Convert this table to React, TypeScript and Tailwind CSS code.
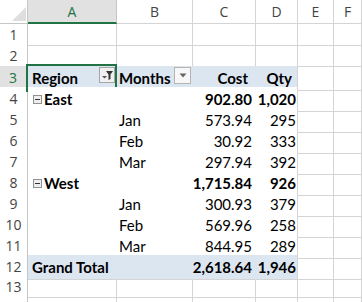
type Kind = "empty" | "header" | "sub" | "item" | "total";

type Row = {
  n: number;
  kind: Kind;
  a?: string;
  b?: string;
  c?: string;
  d?: string;
  beforeTotal?: boolean;
};

const rows: Row[] = [
  { n: 1, kind: "empty" },
  { n: 2, kind: "empty" },
  { n: 3, kind: "header", a: "Region", b: "Months", c: "Cost", d: "Qty" },
  { n: 4, kind: "sub", a: "East", c: "902.80", d: "1,020" },
  { n: 5, kind: "item", b: "Jan", c: "573.94", d: "295" },
  { n: 6, kind: "item", b: "Feb", c: "30.92", d: "333" },
  { n: 7, kind: "item", b: "Mar", c: "297.94", d: "392" },
  { n: 8, kind: "sub", a: "West", c: "1,715.84", d: "926" },
  { n: 9, kind: "item", b: "Jan", c: "300.93", d: "379" },
  { n: 10, kind: "item", b: "Feb", c: "569.96", d: "258" },
  { n: 11, kind: "item", b: "Mar", c: "844.95", d: "289", beforeTotal: true },
  { n: 12, kind: "total", a: "Grand Total", c: "2,618.64", d: "1,946" },
  { n: 13, kind: "empty" },
  { n: 14, kind: "empty" },
];

const cols = "grid grid-cols-[28px_89px_76px_63px_42px_36px_1fr]";
const grid = "border-r border-b border-[#d4d4d4]";
const hdrFont = "font-['Open_Sans',sans-serif] text-[14px] text-[#444]";

// little funnel + arrow button on the row field
const FilterButton = () => (
  <div className="absolute right-[1px] top-[1px] w-[16px] h-[16px] border border-[#a6a6a6] bg-[#f0f0f0]">
    <svg width="14" height="14" viewBox="0 0 14 14">
      <polygon points="2,8 7,8 4.5,10.5" fill="#555" />
      <polygon points="6,3 13,3 10.5,6.5 10.5,11 8.5,12 8.5,6.5" fill="#333" />
    </svg>
  </div>
);

const DropButton = () => (
  <div className="absolute right-[1px] top-[1px] w-[17px] h-[17px] border border-[#b4b4b4] bg-[#f7f7f7] flex items-center justify-center">
    <svg width="8" height="5" viewBox="0 0 8 5">
      <polygon points="0.5,0.5 7.5,0.5 4,4.5" fill="#666" />
    </svg>
  </div>
);

const Collapse = () => (
  <span className="inline-flex items-center justify-center w-[9px] h-[9px] border border-[#919191] bg-[#eeeeee] mr-[2px] ml-[1px]">
    <span className="block w-[5px] h-[1px] bg-[#333]" />
  </span>
);

function PivotCells({ r }: { r: Row }) {
  const bold =
    r.kind === "header" || r.kind === "sub" || r.kind === "total" ? "font-bold" : "";
  const bg = r.kind === "header" || r.kind === "total" ? "bg-[#dce6f1]" : "bg-white";
  const bottom =
    r.kind === "header" || r.kind === "sub" || r.beforeTotal
      ? "border-b border-[#a9c0de]"
      : r.kind === "total"
        ? "border-b border-[#d4d4d4]"
        : "border-b border-transparent";
  const base = `relative flex items-center pt-[1px] font-['Lato',sans-serif] text-[15px] text-black ${bg} ${bottom} ${bold}`;

  return (
    <>
      <div className={`${base} border-r border-r-transparent pl-[4px]`}>
        {r.kind === "sub" && <Collapse />}
        <span className="whitespace-nowrap">{r.a}</span>
        {r.kind === "header" && (
          <>
            <FilterButton />
            <div className="absolute -left-[2px] -top-[2px] -right-[1px] -bottom-[2px] border-2 border-[#217346] pointer-events-none" />
            <div className="absolute -right-[4px] -bottom-[5px] w-[7px] h-[7px] bg-[#217346] border border-white" />
          </>
        )}
      </div>
      <div className={`${base} border-r border-r-transparent pl-[2px]`}>
        <span>{r.b}</span>
        {r.kind === "header" && <DropButton />}
      </div>
      <div className={`${base} border-r border-r-transparent justify-end ${r.kind === "header" ? "pr-[7px]" : "pr-[3px]"}`}>
        {r.c}
      </div>
      <div className={`${base} border-r border-r-[#d4d4d4] justify-end ${r.kind === "header" ? "pr-[5px]" : "pr-[1px]"}`}>
        {r.d}
      </div>
    </>
  );
}

export default function App() {
  return (
    <div className="w-[362px] h-[302px] overflow-hidden bg-white select-none">
      <div className={`${cols} h-[24px]`}>
        <div className="relative border-r border-b border-[#c6c6c6] bg-white">
          <svg className="absolute left-[12px] top-[7px]" width="14" height="14" viewBox="0 0 14 14">
            <polygon points="14,0 14,14 0,14" fill="#dedede" />
          </svg>
        </div>
        <div className={`flex items-center justify-center border-r border-[#c6c6c6] border-b-2 border-b-[#217346] bg-[#e1e1e1] ${hdrFont} !text-[#217346]`}>
          A
        </div>
        {["B", "C", "D", "E", "F"].map((l) => (
          <div
            key={l}
            className={`flex items-center justify-center border-r border-b border-[#d4d4d4] bg-white ${hdrFont}`}
          >
            {l}
          </div>
        ))}
      </div>
      {rows.map((r) => {
        const pivot = r.n >= 3 && r.n <= 12;
        const sel = r.n === 3;
        return (
          <div key={r.n} className={`${cols} h-[21px]`}>
            <div
              className={`flex items-center justify-center border-b border-[#d4d4d4] ${hdrFont} ${
                sel
                  ? "bg-[#e1e1e1] border-r-2 border-r-[#217346] !text-[#217346]"
                  : "bg-white border-r border-r-[#c6c6c6]"
              }`}
            >
              {r.n}
            </div>
            {pivot ? (
              <PivotCells r={r} />
            ) : (
              <>
                <div className={grid} />
                <div className={grid} />
                <div className={grid} />
                <div className={grid} />
              </>
            )}
            <div className={grid} />
            <div className={grid} />
          </div>
        );
      })}
    </div>
  );
}
